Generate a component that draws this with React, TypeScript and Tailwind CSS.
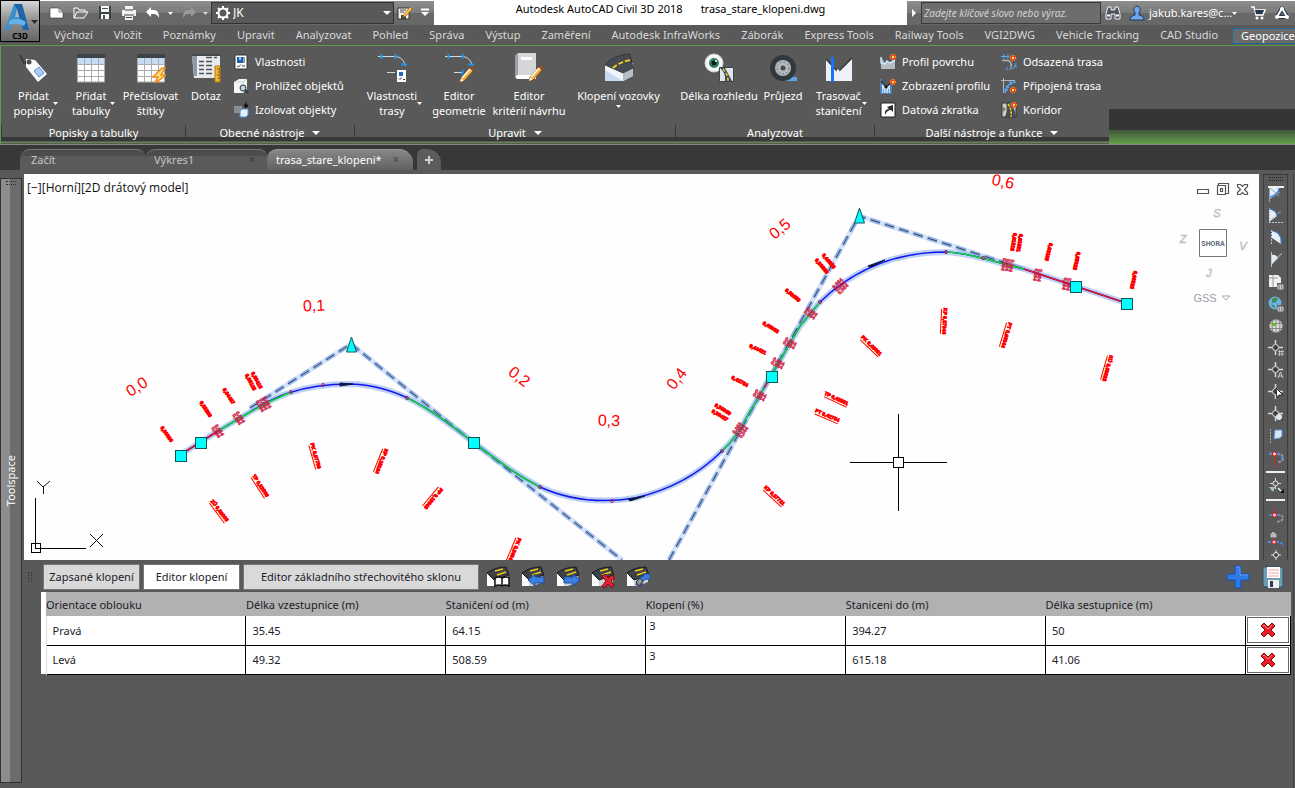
import type { ReactNode } from "react";

const menuTabs = [
  "Výchozí",
  "Vložit",
  "Poznámky",
  "Upravit",
  "Analyzovat",
  "Pohled",
  "Správa",
  "Výstup",
  "Zaměření",
  "Autodesk InfraWorks",
  "Záborák",
  "Express Tools",
  "Railway Tools",
  "VGI2DWG",
  "Vehicle Tracking",
  "CAD Studio",
];

const columns = [
  "Orientace oblouku",
  "Délka vzestupnice (m)",
  "Staničení od (m)",
  "Klopení (%)",
  "Staniceni do (m)",
  "Délka sestupnice (m)",
];

const rows = [
  ["Pravá", "35.45", "64.15", "3", "394.27", "50"],
  ["Levá", "49.32", "508.59", "3", "615.18", "41.06"],
];

// x, y, rotation, text
type Label = [number, number, number, string];

const kmLabels: Label[] = [
  [137, 387, -32, "0,0"],
  [314, 306, -3, "0,1"],
  [519, 377, 38, "0,2"],
  [609, 421, 2, "0,3"],
  [677, 379, -52, "0,4"],
  [780, 229, -40, "0,5"],
  [1003, 182, 12, "0,6"],
];

const stationLabels: Label[] = [
  [167, 434, 55, "0,00000"],
  [206, 409, 57, "0,02800"],
  [229, 396, 57, "0,04467"],
  [251, 382, 62, "0,06115"],
  [257, 380, 62, "0,06415"],
  [758, 349, 25, "0,44421"],
  [740, 381, 28, "0,42754"],
  [723, 409, 32, "0,39960"],
  [720, 415, 32, "0,39427"],
  [793, 295, 40, "0,50859"],
  [771, 327, 32, "0,46092"],
  [829, 261, 50, "0,49360"],
  [822, 266, 50, "0,50859"],
  [1014, 242, 100, "0,61518"],
  [1020, 243, 100, "0,61851"],
  [1049, 252, 105, "0,63185"],
  [1077, 261, 102, "0,65623"],
  [1134, 280, 102, "0,66823"],
];

const pointLabels: Label[] = [
  [219, 511, 53, "ZÚ 0,00000"],
  [260, 486, 57, "TP 0,02800"],
  [315, 456, 74, "PK 0,07799"],
  [381, 461, 112, "KP 0,15184"],
  [433, 498, 130, "PP 0,19648"],
  [514, 550, 113, "PK 0,24648"],
  [836, 399, 25, "TP 0,43951"],
  [827, 416, 23, "PT 0,42754"],
  [774, 496, 43, "KP 0,37721"],
  [871, 346, 44, "PK 0,49681"],
  [944, 321, 93, "KP 0,57044"],
  [1006, 335, 107, "PT 0,60044"],
  [1107, 368, 106, "KÚ 0,66823"],
];

const clusters: [number, number, number, number][] = [
  [218, 431, 57, 2],
  [239, 418, 57, 2],
  [264, 404, 62, 3],
  [740, 430, -55, 3],
  [760, 395, 28, 2],
  [778, 363, 28, 2],
  [790, 343, 28, 2],
  [811, 313, 35, 2],
  [840, 286, -45, 3],
  [1008, 265, 100, 3],
  [1038, 275, 100, 2],
  [1067, 284, 100, 2],
];

const grips = [
  [180, 455],
  [200, 442],
  [473, 442],
  [771, 376],
  [1075, 286],
  [1126, 303],
];

const curvePath =
  "M180 455 L218 431 L250 412 C270 400 295 384 351 384 C400 386 430 409 473 442 C500 462 515 474 540 487 C575 503 610 502 635 498 C670 490 700 473 722 451 C732 442 740 431 748 415 L771 376 L800 326 L820 302 C850 273 890 252 946 252 C970 253 995 262 1024 269 L1126 303";
const tangentPath = "M250 408 L351 344 L473 442 L622 560 M669 560 L859 216 L1024 269";

function Svg({
  size,
  className = "",
  children,
}: {
  size: number;
  className?: string;
  children: ReactNode;
}) {
  return (
    <svg
      width={size}
      height={size}
      viewBox={`0 0 ${size} ${size}`}
      className={`shrink-0 ${className}`}
      fill="none"
      aria-hidden="true"
    >
      {children}
    </svg>
  );
}

function Caret({ className = "" }: { className?: string }) {
  return (
    <svg width="5" height="3" viewBox="0 0 5 3" className={`shrink-0 ${className}`} aria-hidden="true">
      <path d="M0 0h5L2.500 3z" fill="#fff" />
    </svg>
  );
}

function Pencil() {
  return (
    <g>
      <path d="M26 15l3 3-9 10-4 1 1-4z" fill="#f5b83d" stroke="#8a4a10" strokeWidth=".8" />
      <path d="M18 25l8-9" stroke="#fff" strokeWidth="1.500" />
      <path d="M26 15l2-2 3 3-2 2z" fill="#9a4a25" />
      <path d="M16 29l1-3.500 2.500 2z" fill="#fff" />
    </g>
  );
}

function Spark({ x, y }: { x: number; y: number }) {
  return (
    <g>
      <circle cx={x} cy={y} r="2.800" fill="#ff2a10" />
      <circle cx={x} cy={y} r="1.200" fill="#fff27a" />
      <circle cx={x} cy={y} r="2.700" stroke="#ffd83a" strokeWidth="1" strokeDasharray="1 1.200" />
    </g>
  );
}

function TagIcon() {
  return (
    <Svg size={30}>
      <path d="M1 2l4 8 5-1" stroke="#2d3338" strokeWidth="1.500" />
      <path d="M7 6l9 1 12 14-9 8L7 14z" fill="#fdfdfd" />
      <circle cx="10" cy="9" r="2.500" fill="#4a5257" />
      <path d="M15 18l5-4 5 6-5 4z" fill="#a9cdf7" stroke="#5f91cf" />
    </Svg>
  );
}

function TableIcon({ bolt = false }: { bolt?: boolean }) {
  return (
    <Svg size={30}>
      <path d="M1 1h28v28H1z" fill="#fff" />
      <path d="M1 1h28v4H1z" fill="#3c4449" />
      <path d="M1 5h28v6H1z" fill="#c5daf3" />
      <path d="M1 11.500h28M1 17.500h28M1 23.500h28M8.500 5v24M15.500 5v24M22.500 5v24M1.500 5v24h27V5" stroke="#a9adb0" />
      {bolt && <path d="M26 15l-9 9h5l-4 7 12-9h-5l4-7z" fill="#ffe08a" stroke="#f08a12" strokeWidth="1.500" />}
    </Svg>
  );
}

function QueryIcon() {
  return (
    <Svg size={30}>
      <path d="M1 2h28v23H3z" fill="#e9ebee" />
      <path d="M1 1h28v2H1z" fill="#444b50" />
      <path d="M1 3h5v20H3z" fill="#8d99a5" />
      <path d="M15 4.500h6M23 4.500h3M8 8.500h5M8 12.500h5M8 16.500h5M8 20.500h5M15 8.500h6M15 12.500h6M15 16.500h6M15 20.500h6" stroke="#4d5458" strokeWidth="1.500" />
      <path d="M24 13h5v16h-5z" fill="#f2b632" stroke="#b77d13" />
      <path d="M26 16h3M27 19h2M26 22h3M27 25h2" stroke="#7a500a" />
    </Svg>
  );
}

function AlignmentIcon({ edit = false }: { edit?: boolean }) {
  return (
    <Svg size={30}>
      <path d="M1 3.500h16c7 0 10 4 11 9" stroke="#d7dadc" />
      <path d="M4.500 1v5M18.500 1v5M24 11.500h6" stroke="#1597ea" strokeWidth="2" />
      <path d="M10 19.500h8" stroke="#d7dadc" />
      {edit ? (
        <>
          <path d="M18.500 17v5" stroke="#1597ea" strokeWidth="2" />
          <Pencil />
        </>
      ) : (
        <>
          <path d="M20 17h9v12h-9z" fill="#fff" />
          <path d="M22 19h4v4h-4z" fill="#2267bb" />
          <path d="M22 25.500l1 1 1.500-2M26 26.500h2" stroke="#333" />
        </>
      )}
    </Svg>
  );
}

function CriteriaIcon() {
  return (
    <Svg size={32}>
      <path d="M2 4l3-3h18v26H4l-2-2z" fill="#d4d6d8" />
      <path d="M4 23h19v4H4l-1-2z" fill="#fff" />
      <path d="M8 5h11v3H8z" fill="#fff" />
      <path d="M2 4l3-3v21l-3 3z" fill="#9b9fa3" />
      <Pencil />
    </Svg>
  );
}

function RoadIcon() {
  return (
    <Svg size={30}>
      <path d="M1 12v16h18l10-5V10z" fill="#f2f6fb" />
      <path d="M1 17l18 11H1z" fill="#c7daf0" />
      <path d="M19 20l10-5v8l-10 5z" fill="#b8bec6" />
      <path d="M1 12Q9 2 26 1l3 14-10 5z" fill="#454b51" stroke="#2b3034" strokeWidth=".8" />
      <path d="M9 15q6-6 18-8" stroke="#f6d21c" strokeWidth="1.800" strokeDasharray="5 2" />
    </Svg>
  );
}

function SightIcon() {
  return (
    <Svg size={30}>
      <circle cx="10" cy="10" r="9" fill="#f6f6f6" stroke="#d3d3d3" />
      <circle cx="10" cy="10" r="5" fill="#2b8069" />
      <circle cx="10" cy="10" r="2.500" fill="#061b16" />
      <circle cx="12" cy="8" r="1" fill="#fff" />
      <path d="M15.500 14.500h14v14h-14z" fill="#dce6f1" stroke="#3c4449" />
      <path d="M16 15h5l7 13h-7q1-8-5-13z" fill="#454b51" />
      <path d="M19 16q5 5 5 12" stroke="#f6d21c" strokeWidth="1.500" strokeDasharray="3 2" />
    </Svg>
  );
}

function TyreIcon() {
  return (
    <Svg size={30}>
      <path d="M17 24h12v4H17z" fill="#5ca4e8" />
      <circle cx="15" cy="15" r="13" fill="#30393f" />
      <circle cx="15" cy="15" r="8" fill="#b6b9bb" />
      <circle cx="15" cy="15" r="6" stroke="#6c7276" strokeDasharray="2 2" />
      <circle cx="15" cy="15" r="2.500" fill="#454b51" />
    </Svg>
  );
}

function StationIcon() {
  return (
    <Svg size={30}>
      <path d="M2 6l12 13L28 5v23H2z" fill="#edf2f8" />
      <path d="M2 6l11 12 2 0L28 5" stroke="#31383d" strokeWidth="1.500" />
      <path d="M8.500 4v25" stroke="#1b72ff" strokeWidth="3" />
      <circle cx="14" cy="18" r="1.500" fill="#fff" />
    </Svg>
  );
}

const smallIcons: Record<string, ReactNode> = {
  props: (
    <>
      <path d="M2 1h12v14H2z" fill="#fff" stroke="#31383d" />
      <path d="M4 3h6v6H4z" fill="#1d5fb4" />
      <path d="M6 3h2v3H6z" fill="#9cc4f4" />
      <path d="M11 3v6M4 12l1.500 1L8 10.500M9 12h3" stroke="#31383d" />
    </>
  ),
  browser: (
    <>
      <path d="M1 4l5-3h8v10l-4 4H1z" fill="#f4f7fa" />
      <path d="M1 4h9v4M10 4l4-3" stroke="#c8d0d8" />
      <circle cx="10" cy="10" r="2.800" fill="#c5d9f0" stroke="#4a5157" strokeWidth="1.200" />
      <path d="M12 12l3 3" stroke="#31383d" strokeWidth="2" />
    </>
  ),
  isolate: (
    <>
      <path d="M1 4h8v7H1z" fill="#8a8f93" />
      <path d="M7 9l2-2h6v6l-2 2H7z" fill="#e5f1ff" stroke="#4d93de" />
      <path d="M13 0v5M11 3l2 3 2-3z" stroke="#111" fill="#111" />
    </>
  ),
  profile: (
    <>
      <path d="M1 3l4 6 2-2 3 2 5-3v9H1z" fill="#b7bcc0" />
      <path d="M1 3v6l4 1 2-3 3 2 5-3" stroke="#cfe5ff" strokeWidth="1.500" />
      <Spark x={13} y={3} />
    </>
  ),
  profileView: (
    <>
      <path d="M1 1v14h10V6" stroke="#4f9cf0" strokeWidth="1.200" />
      <path d="M2 4l4 5 4-3v9H2z" fill="#cfe2f8" />
      <path d="M1 3l5 6 5-4" stroke="#2b3034" strokeWidth="1.500" />
      <circle cx="6" cy="9" r="1.500" fill="#111" />
      <path d="M3.500 11v4M6 11v4M8.500 11v4" stroke="#6fa3dc" />
      <Spark x={13} y={4} />
    </>
  ),
  shortcut: (
    <>
      <path d="M1 1h14v14H1z" fill="#fff" stroke="#222" />
      <path d="M5 13q-1-6 4-6L7 5l6-2v7l-2-2q-4 0-6 5z" fill="#222a30" />
    </>
  ),
  offset: (
    <>
      <path d="M0 2.500h8M3 0v5M7 0v5M15 9q0 6-7 6M6 13v3M13 12l3 1" stroke="#5aa5f5" />
      <path d="M1 6.500h6q4 1 3 7" stroke="#aeb3b6" strokeWidth="1.500" />
      <Spark x={12} y={4} />
    </>
  ),
  connected: (
    <>
      <path d="M0 2.500h14M2.500 0v15" stroke="#b3b7ba" />
      <path d="M15 4q-9 0-11 11M2 12h5M5 8l3 2M9 3l1 4" stroke="#5aa5f5" strokeWidth="1.500" />
      <Spark x={12} y={12} />
    </>
  ),
  corridor: (
    <>
      <path d="M1 1h14v14H1z" fill="#c9cdd1" stroke="#333" />
      <path d="M5 1h4q5 5 6 14H4q3-8 1-14z" fill="#454b51" />
      <path d="M7 2q4 5 3 13" stroke="#f6d21c" strokeWidth="1.500" strokeDasharray="3 1" />
      <path d="M1 4l4 3-4 4z" fill="#8a7d55" />
      <Spark x={13} y={3} />
    </>
  ),
};

function BigButton({
  icon,
  lines,
  caret,
  width,
}: {
  icon: ReactNode;
  lines: string[];
  caret?: "side" | "below";
  width: string;
}) {
  return (
    <button className={`${width} flex shrink-0 flex-col items-center`}>
      <span className="flex h-[34px] items-center pt-[2px]">{icon}</span>
      <span className="relative mt-1 block text-center leading-[15px] whitespace-nowrap">
        {lines.map((line) => (
          <span key={line} className="block">
            {line}
          </span>
        ))}
        {caret === "side" && <Caret className="absolute top-[14px] left-full" />}
      </span>
      {caret === "below" && <Caret className="mt-[2px]" />}
    </button>
  );
}

function SmallButton({ icon, label }: { icon: string; label: string }) {
  return (
    <button className="flex h-6 items-center gap-[6px] whitespace-nowrap">
      <Svg size={16}>{smallIcons[icon]}</Svg>
      {label}
    </button>
  );
}

function RibbonPanel({
  title,
  width,
  menu = true,
  children,
}: {
  title: string;
  width: string;
  menu?: boolean;
  children: ReactNode;
}) {
  return (
    <section className={`${width} flex h-[98px] shrink-0 flex-col bg-[#595959]`}>
      <div className="flex h-[79px] px-1 pt-1">{children}</div>
      <div className="relative flex h-4 items-center justify-center gap-2 border-l border-[#383838]">
        <span className="absolute inset-x-0 bottom-0 h-1 bg-[#383838]" />
        <span className="relative">{title}</span>
        {menu && (
          <svg width="8" height="4" viewBox="0 0 8 4" className="relative" aria-hidden="true">
            <path d="M0 0h8L4 4z" fill="#fff" />
          </svg>
        )}
      </div>
      <div className="mt-px h-px bg-[#5b8f45]" />
    </section>
  );
}

function QuickIcon({ label, width = "w-6", children }: { label: string; width?: string; children: ReactNode }) {
  return (
    <button aria-label={label} className={`${width} flex shrink-0 justify-center`}>
      <Svg size={16}>{children}</Svg>
    </button>
  );
}

function TitleBar() {
  return (
    <div className="flex h-[25px] bg-white pt-px">
      <div className="flex w-[394px] shrink-0 items-center bg-linear-to-b from-[#8e8e8e] via-[#7a7a7a] via-50% to-[#686868] to-50% pl-[5px]">
        <QuickIcon label="Nový">
          <path d="M1 3h9l4 4v6H1z" fill="#fff" stroke="#333" strokeWidth=".6" />
          <path d="M10 3v4h4" stroke="#777" />
        </QuickIcon>
        <QuickIcon label="Otevřít">
          <path d="M1 13V3h4l1 2h6v2M1 13l3-6h11l-4 6z" fill="#777" stroke="#fff" />
        </QuickIcon>
        <QuickIcon label="Uložit">
          <path d="M2 1h12v13H2z" fill="#3c4144" />
          <path d="M4 1h8v6H4zM4 9h8v5H4z" fill="#f5f5f5" />
          <path d="M6 10h2v4H6zM5 3h6v1H5z" fill="#555" />
        </QuickIcon>
        <QuickIcon label="Tisk">
          <path d="M4 1h8v4H4zM1 5h14v6H1zM4 9h8v6H4z" fill="#f3f3f3" />
          <path d="M3 10h10M5 12.500h6M4 5h8" stroke="#444" />
        </QuickIcon>
        <QuickIcon label="Zpět">
          <path d="M1 7l5-5v3h3q5 0 5 8-2-4-5-4H6v3z" fill="#fff" />
        </QuickIcon>
        <Caret className="mx-[3px]" />
        <QuickIcon label="Znovu" width="w-[26px]">
          <path d="M15 7l-5-5v3H7q-5 0-5 8 2-4 5-4h3v3z" fill="#999" />
        </QuickIcon>
        <Caret className="mr-[3px] ml-px opacity-70" />
        <label className="relative flex h-[22px] flex-1 items-center border border-[#333] bg-[#595959] pl-[3px]">
          <Svg size={16}>
            <circle cx="8" cy="8" r="4.500" stroke="#fff" strokeWidth="2" />
            <path d="M8 1v3M8 12v3M1 8h3M12 8h3M3 3l2 2M11 11l2 2M13 3l-2 2M5 11l-2 2" stroke="#fff" strokeWidth="2" />
          </Svg>
          <select aria-label="Pracovní prostor" className="w-full appearance-none bg-transparent pl-[2px] text-[12px]">
            <option>JK</option>
          </select>
          <svg width="8" height="4" viewBox="0 0 8 4" className="absolute right-[2px]" aria-hidden="true">
            <path d="M0 0h8L4 4z" fill="#fff" />
          </svg>
        </label>
        <QuickIcon label="Uložit pracovní prostor" width="w-[22px]">
          <path d="M1 3h11v11H1z" fill="#f5f5f5" stroke="#333" />
          <path d="M3 5h6M3 7h4" stroke="#444" />
          <path d="M4 10h5v4H4z" fill="#444" />
          <path d="M7 9l6-7 2 2-6 7-3 1z" fill="#ffc04a" stroke="#a6611a" strokeWidth=".7" />
        </QuickIcon>
        <QuickIcon label="Přizpůsobit" width="w-[18px]">
          <path d="M4 4.500h8" stroke="#fff" strokeWidth="2" />
          <path d="M4 7h8l-4 4z" fill="#fff" />
        </QuickIcon>
      </div>
      <div className="flex min-w-0 flex-1 justify-center gap-[18px] text-[11px] leading-4 text-black">
        <span>Autodesk AutoCAD Civil 3D 2018</span>
        <span>trasa_stare_klopeni.dwg</span>
      </div>
      <div className="flex w-[388px] shrink-0 items-center overflow-hidden bg-linear-to-b from-[#8e8e8e] via-[#7a7a7a] via-50% to-[#686868] to-50%">
        <svg width="14" height="8" viewBox="0 0 14 8" aria-hidden="true">
          <path d="M5 0l4 4-4 4z" fill="#fff" />
        </svg>
        <input
          aria-label="Hledat"
          placeholder="Zadejte klíčové slovo nebo výraz."
          className="h-[22px] w-[180px] border border-[#3a3a3a] bg-[#6d6d6d] px-[2px] text-[10px] italic placeholder:text-[#d2d2d2]"
        />
        <QuickIcon label="Vyhledat">
          <path d="M3 2h3v3h4V2h3l2 7v5h-5V9H6v5H1V9z" fill="#4b525c" stroke="#f0f3f6" />
          <path d="M2 10.500h3M11 10.500h3" stroke="#fff" strokeWidth="2" />
        </QuickIcon>
        <QuickIcon label="Uživatel">
          <path d="M1 15q0-4 5-5V8Q4 5 5 3q3-4 6 0 1 2-1 5v2q5 1 5 5z" fill="#6ea6ea" stroke="#1f3658" />
        </QuickIcon>
        <button className="flex items-center text-[11px] whitespace-nowrap">
          jakub.kares@c...
          <Caret />
        </button>
        <div className="ml-auto flex pr-px">
          <QuickIcon label="Obchod">
            <path d="M1 2h3l2 8h7l2-5H5" stroke="#fff" strokeWidth="1.500" />
            <path d="M5 5h9l-2 4H6z" fill="#26384d" />
            <circle cx="7" cy="13" r="1.500" fill="#fff" />
            <circle cx="12" cy="13" r="1.500" fill="#fff" />
          </QuickIcon>
          <QuickIcon label="A360">
            <path d="M8 3l5 9H3z" stroke="#26384d" strokeWidth="4" strokeLinejoin="round" />
            <path d="M8 3l5 9H3z" stroke="#fff" strokeWidth="2" />
            <circle cx="8" cy="4" r="2" fill="#fff" />
            <circle cx="3" cy="12" r="2" fill="#fff" />
            <circle cx="13" cy="12" r="2" fill="#fff" />
          </QuickIcon>
        </div>
      </div>
    </div>
  );
}

function Header() {
  return (
    <header className="flex h-[45px] bg-[#595959]">
      <button
        aria-label="Nabídka aplikace"
        className="flex h-[42px] w-10 shrink-0 flex-col items-center border border-black bg-linear-to-b from-[#d5d5d5] via-[#8f8f8f] to-[#666] text-[8px] leading-[9px] font-bold text-black"
      >
        <svg width="38" height="30" viewBox="0 0 38 30" aria-hidden="true">
          <path d="M4 29L13 3h8l7 26h-6l-2-6H11l-3 6z" fill="#3a8fd0" />
          <path d="M13 3h8l7 26h-6L16 8z" fill="#1d64a8" />
          <path d="M16 8l2 8h-4z" fill="#b5b5b5" />
          <path d="M8 20q8-5 17 1l-2 4q-7-4-15-1z" fill="#63b3e6" />
          <path d="M30 19h7l-3.500 4z" fill="#2b2e38" />
        </svg>
        C3D
      </button>
      <div className="flex min-w-0 flex-1 flex-col">
        <TitleBar />
        <nav className="flex h-5 items-center gap-px overflow-hidden pt-px pl-1 text-[11px] text-[#d8d8d8]">
          {menuTabs.map((tab) => (
            <button key={tab} className="shrink-0 px-[10px] whitespace-nowrap">
              {tab}
            </button>
          ))}
          <button className="ml-[3px] h-4 w-[90px] shrink-0 border border-[#236a9b] bg-[#6a6a6a] pl-2 text-left leading-[14px] text-white">
            Geopozice
          </button>
        </nav>
      </div>
    </header>
  );
}

function Ribbon() {
  return (
    <div className="border-t border-b border-l border-t-[#5f9a48] border-b-[#868686] border-l-[#5f9a48] bg-[#595959] text-[11px] text-white">
      <div className="flex h-[98px] overflow-hidden">
        <RibbonPanel title="Popisky a tabulky" width="w-[184px]" menu={false}>
          <BigButton width="w-[57px]" icon={<TagIcon />} lines={["Přidat", "popisky"]} caret="side" />
          <BigButton width="w-[58px]" icon={<TableIcon />} lines={["Přidat", "tabulky"]} caret="side" />
          <BigButton width="w-[61px]" icon={<TableIcon bolt />} lines={["Přečíslovat", "štítky"]} />
        </RibbonPanel>
        <RibbonPanel title="Obecné nástroje" width="w-[169px]">
          <BigButton width="w-[34px]" icon={<QueryIcon />} lines={["Dotaz"]} />
          <div className="ml-[10px] flex flex-col">
            <SmallButton icon="props" label="Vlastnosti" />
            <SmallButton icon="browser" label="Prohlížeč objektů" />
            <SmallButton icon="isolate" label="Izolovat objekty" />
          </div>
        </RibbonPanel>
        <RibbonPanel title="Upravit" width="w-[321px]">
          <BigButton width="w-[68px]" icon={<AlignmentIcon />} lines={["Vlastnosti", "trasy"]} caret="side" />
          <BigButton width="w-[66px]" icon={<AlignmentIcon edit />} lines={["Editor", "geometrie"]} />
          <BigButton width="w-[74px]" icon={<CriteriaIcon />} lines={["Editor", "kritérií návrhu"]} />
          <BigButton width="w-[105px]" icon={<RoadIcon />} lines={["Klopení vozovky"]} caret="below" />
        </RibbonPanel>
        <RibbonPanel title="Analyzovat" width="w-[199px]" menu={false}>
          <BigButton width="w-[80px]" icon={<SightIcon />} lines={["Délka rozhledu"]} />
          <BigButton width="w-[48px]" icon={<TyreIcon />} lines={["Průjezd"]} />
          <BigButton width="w-[63px]" icon={<StationIcon />} lines={["Trasovač", "staničení"]} caret="side" />
        </RibbonPanel>
        <RibbonPanel title="Další nástroje a funkce" width="w-[235px]">
          <div className="ml-[2px] flex w-[121px] flex-col">
            <SmallButton icon="profile" label="Profil povrchu" />
            <SmallButton icon="profileView" label="Zobrazení profilu" />
            <SmallButton icon="shortcut" label="Datová zkratka" />
          </div>
          <div className="flex flex-col">
            <SmallButton icon="offset" label="Odsazená trasa" />
            <SmallButton icon="connected" label="Připojená trasa" />
            <SmallButton icon="corridor" label="Koridor" />
          </div>
        </RibbonPanel>
        <div className="flex flex-1 flex-col">
          <div className="h-[63px]" />
          <div className="h-[21px] bg-[#353535]" />
          <div className="flex-1 bg-linear-to-b from-[#40573a] to-[#65a04b]" />
        </div>
      </div>
    </div>
  );
}

function FileTabs() {
  return (
    <div className="h-[29px] border-b-4 border-[#595959] bg-[#383838] pt-1 pl-5 text-[11px] text-[#c4c4c4]">
      <div className="flex h-[21px]">
        <button className="w-[125px] rounded-tl-[10px] rounded-tr-lg border-t border-[#777] bg-linear-to-b from-[#4c4c4c] from-30% to-[#5a5a5a] to-30% pl-[11px] text-left">
          Začít
        </button>
        <button className="flex w-[122px] items-center justify-between rounded-tl-[10px] rounded-tr-lg border-t border-[#777] bg-linear-to-b from-[#4c4c4c] from-30% to-[#5a5a5a] to-30% pr-3 pl-[9px]">
          Výkres1
          <span className="text-[12px] text-[#3c3c3c]">×</span>
        </button>
        <button className="flex w-[146px] items-center justify-between rounded-tl-[10px] rounded-tr-[14px] border-t border-[#999] bg-linear-to-b from-[#868686] to-[#626262] pr-[14px] pl-[9px] text-white">
          trasa_stare_klopeni*
          <span className="text-[12px] text-[#484848]">×</span>
        </button>
        <button
          aria-label="Nový výkres"
          className="ml-1 flex w-6 items-center justify-center rounded-tl-md rounded-tr-[14px] bg-[#5c5c5c]"
        >
          <Svg size={10}>
            <path d="M5 1v8M1 5h8" stroke="#d0d0d0" strokeWidth="2" />
          </Svg>
        </button>
      </div>
    </div>
  );
}

function Toolspace() {
  return (
    <aside className="flex w-6 shrink-0 flex-col pt-1 pb-[5px]">
      <button className="relative flex w-[22px] flex-1 items-center justify-center border border-[#333] bg-linear-to-r from-[#8d8d8d] from-45% to-[#6c6c6c] to-45% text-[11px] text-white">
        <span className="absolute top-[2px] left-[5px] h-1 w-[10px] border-y border-dotted border-[#333]" />
        <span className="rotate-180 [writing-mode:vertical-rl]">Toolspace</span>
      </button>
    </aside>
  );
}

function Drawing() {
  return (
    <svg
      viewBox="24 174 1235 386"
      preserveAspectRatio="xMinYMin slice"
      className="h-full min-w-0 flex-1 bg-[#fefefe]"
      fontFamily="Liberation Sans, Arial, sans-serif"
      role="img"
      aria-label="Výkres trasy"
    >
      <text x="27" y="192" fontSize="12" fontFamily="Open Sans, Noto Sans, sans-serif" fill="#111">
        [−][Horní][2D drátový model]
      </text>

      <g fill="none">
        <path d={tangentPath} stroke="#d5e3f8" strokeWidth="5" />
        <path d={curvePath} stroke="#a9c6f2" strokeWidth="6" strokeLinejoin="round" opacity=".8" />
        <path d={tangentPath} stroke="#8fb1ec" strokeWidth="4" strokeDasharray="10 5" />
        <path d={tangentPath} stroke="#3c424e" strokeWidth="1" strokeDasharray="10 5" />
        <path d={curvePath} stroke="#1515f0" strokeWidth="1.500" />
        <path d="M218 431 L250 412 Q270 401 291 392M407 398 C430 409 450 424 473 442 C500 462 515 474 540 487M722 451 C732 442 740 431 748 415 L771 376 L800 326 L820 302M946 252 C970 253 995 262 1024 269" stroke="#12d832" strokeWidth="1.500" />
        <path d="M180 455L218 431M1024 269L1126 303M764 388l8-14" stroke="#e0142a" strokeWidth="1.500" />
      </g>
      <path d="M340 383l13 1-13 2zM628 499l17-3-15 5zM868 266l17-6-14 7z" fill="#101840" stroke="#101840" />

      <g fill="none" stroke="#a02060">
        {[[291, 392], [323, 385], [407, 398], [540, 487], [612, 501], [722, 451], [820, 302], [946, 252], [983, 258]].map(
          ([x, y]) => (
            <circle key={`${x}-${y}`} cx={x} cy={y} r="1.500" />
          ),
        )}
      </g>

      <g fill="#f00" textAnchor="middle">
        {kmLabels.map(([x, y, angle, text]) => (
          <text
            key={text}
            fontSize="16"
            fontFamily="Liberation Sans Narrow, Liberation Sans, sans-serif"
            transform={`translate(${x} ${y}) rotate(${angle})`}
            y="5"
          >
            {text}
          </text>
        ))}
        {stationLabels.map(([x, y, angle, text], i) => (
          <text key={i} fontSize="5" fontWeight="bold" stroke="#f00" strokeWidth=".9" transform={`translate(${x} ${y}) rotate(${angle})`} y="2">
            {text}
          </text>
        ))}
        {pointLabels.map(([x, y, angle, text]) => (
          <g key={text} transform={`translate(${x} ${y}) rotate(${angle})`}>
            <text fontSize="5" fontWeight="bold" y="1" stroke="#f00" strokeWidth=".8">
              {text}
            </text>
            <path d="M-12 3h25" stroke="#f00" />
          </g>
        ))}
        {clusters.map(([x, y, angle, count]) => (
          <g
            key={`${x}-${y}`}
            transform={`translate(${x} ${y}) rotate(${angle})`}
            fill="#d0103a"
            stroke="#d0103a"
            strokeWidth=".5"
            fontSize="5"
            fontWeight="bold"
            opacity=".85"
          >
            {Array.from({ length: count }, (_, i) => (
              <text key={i} y={(i - (count - 1) / 2) * 4 + 2}>
                0,064
              </text>
            ))}
          </g>
        ))}
      </g>

      <g fill="#0ff" stroke="#155">
        {grips.map(([x, y]) => (
          <rect key={`${x}-${y}`} x={x - 5} y={y - 5} width="11" height="11" shapeRendering="crispEdges" />
        ))}
        <path d="M351.500 337l5 15h-10zM859.500 208l5 15h-10z" />
      </g>

      <g fill="none" stroke="#000" shapeRendering="crispEdges">
        <path d="M898.500 414v43M898.500 468v43M850 462.500h43M904 462.500h43" />
        <path d="M893.500 457.500h10v10h-10z" />
        <path d="M35.500 498v50M35 548.500h51M31.500 543.500h9v9h-9z" />
      </g>
      <path d="M37 481l6 6 7-6M43.500 487v7M90 534l13 13M103 534l-13 13" stroke="#111" fill="none" />

      <g stroke="#555" strokeWidth="1.200" fill="none">
        <path d="M1197.500 189.500h11v4h-11z" />
        <path d="M1218.500 186v-2.500h10v10H1226M1217.500 185.500h8v9h-8zM1220.500 188.500h2v3h-2z" />
        <path d="M1237.500 184.500h3l2 2 2-2h3v2l-3 3 3 3v2h-3l-2-2-2 2h-3v-2l3-3-3-3z" />
      </g>

      <path d="M1199.500 229.500h27v27h-27z" fill="#fff" stroke="#777" />
      <g fill="#9a9fa6" textAnchor="middle" fontSize="10">
        <text x="1213" y="246" fontSize="7" fontWeight="bold" fill="#5b6776" fontFamily="Roboto, sans-serif">
          SHORA
        </text>
        <g fill="none" stroke="#b4b4b4" strokeWidth=".6" fontStyle="italic" fontSize="11">
          <text x="1217" y="217">S</text>
          <text x="1209" y="277">J</text>
          <text x="1183" y="243">Z</text>
          <text x="1243" y="250">V</text>
        </g>
        <text x="1205" y="302" fontSize="11">
          GSS
        </text>
      </g>
      <path d="M1222 296h8l-4 4z" fill="none" stroke="#aaa" />
    </svg>
  );
}

function Target({ children }: { children?: ReactNode }) {
  return (
    <>
      <path d="M7.500 0v4M7.500 11v4M0 7.500h4M11 7.500h4" stroke="#d8d8d8" strokeWidth="1.500" />
      <circle cx="7.500" cy="7.500" r="3" stroke="#e9e9e9" fill="#3d3d3d" />
      {children}
    </>
  );
}

const bend = (
  <>
    <path d="M1 4h8q6 0 6 4t-6 4" stroke="#8b98a8" strokeWidth="2" strokeDasharray="3 1" />
    <path d="M1 3.500h3M9 3.500h3M14 6v3" stroke="#4a8ad8" strokeWidth="2" />
  </>
);

const sideTools: { label: string; icon: ReactNode }[] = [
  {
    label: "Úhel a vzdálenost",
    icon: (
      <>
        <path d="M1 2h10q0 7-10 11z" fill="#e4effb" />
        <path d="M0 1.500h16M1.500 1v15M2 2l9 8M8 9l4-3" stroke="#9aa3ac" />
        <path d="M0 1h16" stroke="#eee" strokeWidth="2" />
        <path d="M11 2q0 6-9 9" stroke="#3e86dc" strokeWidth="1.500" />
      </>
    ),
  },
  {
    label: "Azimut",
    icon: (
      <>
        <path d="M1 1q7 1 8 7l-8 6z" fill="#e4effb" />
        <path d="M1.500 0v15M1 13L13 3M1 14.500h15" stroke="#bfc6ce" strokeDasharray="2 1" />
        <path d="M1 1q7 1 8 7" stroke="#3e86dc" />
      </>
    ),
  },
  {
    label: "Výchylka",
    icon: (
      <>
        <path d="M4 1q10 2 9 13L4 8z" fill="#e4effb" />
        <path d="M3.500 0v15" stroke="#bfc6ce" strokeDasharray="2 1" />
        <path d="M5 1q9 2 8 12" stroke="#3e86dc" />
      </>
    ),
  },
  {
    label: "Směrník",
    icon: (
      <>
        <path d="M3 3q5-1 7 3l-7 7z" fill="#e4eaf1" />
        <path d="M3.500 0v15M3 13L14 1" stroke="#bfc6ce" />
      </>
    ),
  },
  {
    label: "Bod výkresu",
    icon: (
      <>
        <path d="M1 1h9l3 3v9H1z" fill="#f0f0f0" />
        <path d="M5 1v12M1 4h9" stroke="#999" />
        <path d="M9 9h7v7H9z" fill="#595959" />
        <path d="M10 11h5v4h-5zM12.500 11v4M10 13h5" stroke="#ccc" />
      </>
    ),
  },
  {
    label: "Zeměpisná poloha",
    icon: (
      <>
        <circle cx="7" cy="7" r="6.500" fill="#6ab1e3" />
        <path d="M4 3q4-3 6 0l-2 3-4 1zM3 9q4-1 4 4z" fill="#3f8f52" />
        <path d="M9 9h7v7H9z" fill="#595959" />
        <path d="M10 11h5v4h-5zM12.500 11v4M10 13h5" stroke="#ccc" />
      </>
    ),
  },
  {
    label: "Souřadnice",
    icon: (
      <>
        <circle cx="8" cy="8" r="6.500" fill="#ddd" stroke="#888" />
        <path d="M2 5.500h12M2 10.500h12M8 2v12M5 2q-2 6 0 12M11 2q2 6 0 12" stroke="#888" />
        <path d="M4 5h4v3H4z" fill="#62b828" />
      </>
    ),
  },
  {
    label: "Číslo bodu",
    icon: (
      <Target>
        <path d="M10 11.500h6M10 14h6M11.500 10v6M14 10v6" stroke="#bbb" />
      </Target>
    ),
  },
  {
    label: "Název bodu",
    icon: (
      <Target>
        <path d="M10 16l2.500-6 2.500 6M11 14h3" stroke="#ccc" />
      </Target>
    ),
  },
  {
    label: "Vybrat bod",
    icon: (
      <Target>
        <path d="M8 4l7 7h-4l-2 3z" fill="#fff" stroke="#222" />
      </Target>
    ),
  },
  {
    label: "Najít bod",
    icon: (
      <Target>
        <circle cx="11" cy="11" r="3" fill="#d8e9f5" />
        <path d="M13 13l2 2" stroke="#333" />
      </Target>
    ),
  },
  {
    label: "Strana odsazení",
    icon: (
      <>
        <path d="M2.500 1v14" stroke="#aaa" strokeDasharray="2 1" />
        <path d="M7 2h7v6l-2 2-6 1z" fill="#d7e8fa" stroke="#5c96dc" />
      </>
    ),
  },
  {
    label: "Staničení a odsazení",
    icon: (
      <>
        {bend}
        <path d="M6.500 3v13" stroke="#d22" />
        <circle cx="6.500" cy="4" r="2" fill="#ffd0d0" stroke="#e11" />
      </>
    ),
  },
];

const lowerTools: { label: string; icon: ReactNode }[] = [
  {
    label: "Profil staničení",
    icon: (
      <>
        <path d="M1 8h8q6 0 6 3t-7 4" stroke="#8b98a8" strokeWidth="2" strokeDasharray="3 1" />
        <path d="M1 8h3M9 8h3" stroke="#4a8ad8" strokeWidth="2" />
        <path d="M6.500 1v6" stroke="#d22" />
        <circle cx="6.500" cy="8" r="2" fill="#ffd0d0" stroke="#e11" />
      </>
    ),
  },
  {
    label: "Uzamknout",
    icon: (
      <>
        <path d="M2 3l3-3 4 3v4H2z" fill="#b8b8b8" stroke="#555" />
        <path d="M0 11h10q4 0 5 4" stroke="#4a8ad8" strokeWidth="2" strokeDasharray="3 1" />
        <circle cx="6" cy="11" r="2" fill="#ffd0d0" stroke="#e11" />
      </>
    ),
  },
];

function SideToolbar() {
  return (
    <aside className="flex min-h-0 w-[34px] shrink-0 pl-1">
      <div className="flex w-[25px] flex-col items-center overflow-hidden border-x border-t border-[#3a3a3a] bg-[#595959]">
        <span className="my-[2px] h-1 w-[14px] shrink-0 border-y border-dotted border-[#222]" />
        {sideTools.map((tool) => (
          <button key={tool.label} aria-label={tool.label} className="flex h-[22px] shrink-0 items-center">
            <Svg size={16}>{tool.icon}</Svg>
          </button>
        ))}
        <span className="mt-[2px] h-[2px] w-[19px] shrink-0 bg-[#f0f0f0]" />
        <button aria-label="Průhledné příkazy" className="flex h-[26px] shrink-0 items-center">
          <Svg size={16}>
            <path d="M7.500 0v3M7.500 8v3M2 5.500h3M10 5.500h3" stroke="#d8d8d8" />
            <circle cx="7.500" cy="5.500" r="2.500" stroke="#eee" />
            <path d="M1 9h6l-2 5z" fill="#a9c4d0" />
            <path d="M10 10l3 3" stroke="#eee" strokeWidth="1.500" />
            <path d="M12 15h4v-4z" fill="#111" />
          </Svg>
        </button>
        <span className="h-[2px] w-[19px] shrink-0 bg-[#f0f0f0]" />
        {lowerTools.map((tool) => (
          <button key={tool.label} aria-label={tool.label} className="mt-1 flex h-5 shrink-0 items-center">
            <Svg size={16}>{tool.icon}</Svg>
          </button>
        ))}
        <button aria-label="Další" className="flex h-3 shrink-0 items-center">
          <Svg size={10}>
            <path d="M5 0v10M0 5h10" stroke="#ddd" />
            <circle cx="5" cy="5" r="2.500" stroke="#eee" fill="#444" />
          </Svg>
        </button>
      </div>
    </aside>
  );
}

function SmallRoad({ label, children }: { label: string; children: ReactNode }) {
  return (
    <button aria-label={label} className="w-6 shrink-0">
      <Svg size={24}>
        <path d="M1 8l8 6v7H1z" fill="#fff" />
        <path d="M8 14l14-4v7l-10 4H8z" fill="#cfd3d7" />
        <path d="M1 8Q9 2 20 2l3 8-15 5z" fill="#3c4246" stroke="#181a1c" />
        <path d="M11 10l9-3M9 6l8-2" stroke="#f2c81c" strokeWidth="1.500" />
        {children}
      </Svg>
    </button>
  );
}

function DeleteCross() {
  return (
    <Svg size={16}>
      <path d="M1 4l3-3 4 4 4-4 3 3-4 4 4 4-3 3-4-4-4 4-3-3 4-4z" fill="#ee1c24" stroke="#7c0a0e" />
      <path d="M3 4l1-1 4 4 4-4" stroke="#ff8d8d" />
    </Svg>
  );
}

function EditorPanel() {
  return (
    <section className="h-[228px] shrink-0 text-[11px] text-[#1c1c28]">
      <div className="flex h-8 items-center pt-[2px] pr-[9px] pl-1">
        <span className="mr-[11px] h-[10px] w-1 border-x border-dotted border-[#333]" />
        <div className="flex gap-[3px]">
          <button className="h-[26px] w-[97px] border border-[#777] bg-[#d9d9d9] whitespace-nowrap">Zapsané klopení</button>
          <button className="h-[26px] w-[97px] border border-[#777] bg-white whitespace-nowrap">Editor klopení</button>
          <button className="h-[26px] w-[236px] border border-[#777] bg-[#d9d9d9] whitespace-nowrap">
            Editor základního střechovitého sklonu
          </button>
        </div>
        <div className="ml-[7px] flex gap-[11px]">
          <SmallRoad label="Katalog">
            <path d="M9 13q4-2 7 0 4-2 7 0v8q-4-2-7 0-3-2-7 0z" fill="#fff" stroke="#111" strokeWidth="1.500" />
            <path d="M16 13v8" stroke="#111" strokeWidth="1.500" />
          </SmallRoad>
          <SmallRoad label="Importovat">
            <path d="M7 15l7-6v3h9v6h-9v3z" fill="#3c7fe0" stroke="#1d4c9e" />
          </SmallRoad>
          <SmallRoad label="Exportovat">
            <path d="M24 15l-7-6v3H8v6h9v3z" fill="#3c7fe0" stroke="#1d4c9e" />
          </SmallRoad>
          <SmallRoad label="Smazat klopení">
            <path d="M11 11l3-2 3 4 4-3 3 3-4 3 3 4-2 3-4-4-3 4-3-2 4-5z" fill="#e02430" stroke="#7c0a0e" />
          </SmallRoad>
          <SmallRoad label="Obnovit">
            <path d="M10 20q1-8 8-9l-1-2h7v7l-2-2q-6 0-6 6z" fill="#3c7fe0" stroke="#1d4c9e" />
            <path d="M10 17l4-4 3 3-4 5z" fill="#8f979e" stroke="#333" />
          </SmallRoad>
        </div>
        <button aria-label="Přidat" className="ml-auto">
          <Svg size={24}>
            <path d="M9 1h6v8h8v6h-8v8H9v-8H1V9h8z" fill="#2f7be6" stroke="#1a4fae" />
            <path d="M10 2h4v8h8" stroke="#5b9bf5" />
          </Svg>
        </button>
        <button aria-label="Uložit tabulku" className="ml-3">
          <Svg size={22}>
            <path d="M1 1h20v20H3l-2-2z" fill="#6f9bb5" stroke="#35505f" />
            <path d="M5 1h13v11H5z" fill="#fff" />
            <path d="M6 4h11M6 7h11M6 10h11" stroke="#f2a6a6" />
            <path d="M6 14h11v8H6z" fill="#eee" />
            <path d="M8 15h3v6H8z" fill="#2d3c50" />
          </Svg>
        </button>
      </div>
      <div className="pr-[2px] pl-[17px]">
        <table className="w-full table-fixed border-collapse">
          <thead>
            <tr className="h-6 bg-[#b1b1b1]">
              <th className="w-[5px] bg-white" />
              {columns.map((column) => (
                <th key={column} className="p-0 pt-[2px] text-left font-normal whitespace-nowrap">
                  {column}
                </th>
              ))}
              <th className="w-[45px]" />
            </tr>
          </thead>
          <tbody>
            {rows.map((row) => (
              <tr key={row[0]} className="h-[29px] bg-white">
                <td className="border-r border-[#ddd]" />
                {row.map((value, i) => (
                  <td
                    key={i}
                    className={
                      i === 3
                        ? "border-r border-b border-black px-[3px] py-[2px] align-top"
                        : "border-r border-b border-black px-[6px] pt-[2px] pb-0"
                    }
                  >
                    {value}
                  </td>
                ))}
                <td className="border-r border-b border-black p-px">
                  <button
                    aria-label={`Smazat řádek ${row[0]}`}
                    className="flex h-[26px] w-full items-center justify-center border border-[#666] bg-white"
                  >
                    <DeleteCross />
                  </button>
                </td>
              </tr>
            ))}
          </tbody>
        </table>
      </div>
    </section>
  );
}

export default function App() {
  return (
    <div className="flex h-screen flex-col overflow-hidden bg-[#595959] font-['Noto_Sans',sans-serif] text-white">
      <Header />
      <Ribbon />
      <FileTabs />
      <main className="flex min-h-0 flex-1">
        <Toolspace />
        <div className="mr-px flex min-w-0 flex-1 flex-col border-r border-[#3f3f3f]">
          <div className="flex min-h-0 flex-1">
            <Drawing />
            <SideToolbar />
          </div>
          <EditorPanel />
        </div>
      </main>
    </div>
  );
}
